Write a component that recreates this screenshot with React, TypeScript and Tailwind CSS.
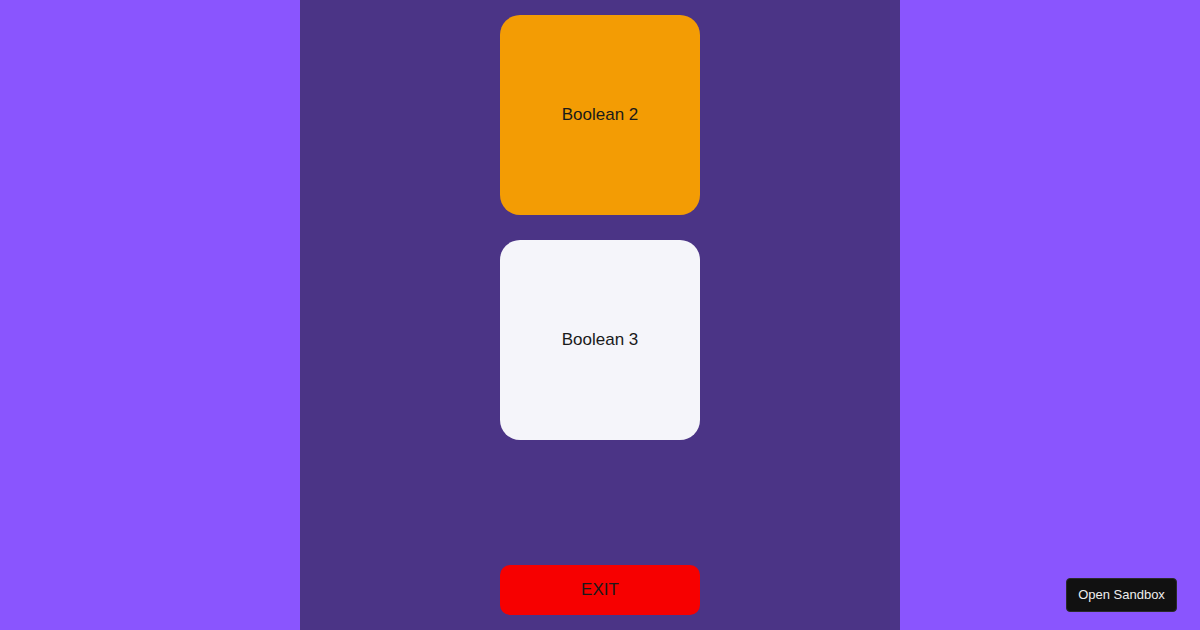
export default function App() {
  const cards = [
    { label: "Boolean 2", bg: "bg-[#f39c04]" },
    { label: "Boolean 3", bg: "bg-[#f5f5fa]" },
  ];

  return (
    <div
      className="relative flex h-[630px] w-full justify-center bg-[#8a55fe]"
      style={{ fontFamily: '"Liberation Sans", Arial, sans-serif' }}
    >
      <div className="flex h-full w-[600px] flex-col items-center bg-[#4b3486] py-[15px]">
        <div className="flex flex-col gap-[25px]">
          {cards.map((c) => (
            <div
              key={c.label}
              className={`flex h-[200px] w-[200px] items-center justify-center rounded-[20px] ${c.bg} text-[17px] text-[#1a1a1a]`}
            >
              {c.label}
            </div>
          ))}
        </div>

        <button className="mt-auto flex h-[50px] w-[200px] items-center justify-center rounded-[10px] bg-[#f70000] text-[17px] text-[#1a1a1a]">
          EXIT
        </button>
      </div>

      {/* Sandbox link */}
      <button className="absolute bottom-[18px] right-[23px] flex h-[34px] w-[111px] items-center justify-center rounded-[4px] border border-[#2a2a2a] bg-[#111111] text-[13px] text-[#eeeeee]">
        Open Sandbox
      </button>
    </div>
  );
}
